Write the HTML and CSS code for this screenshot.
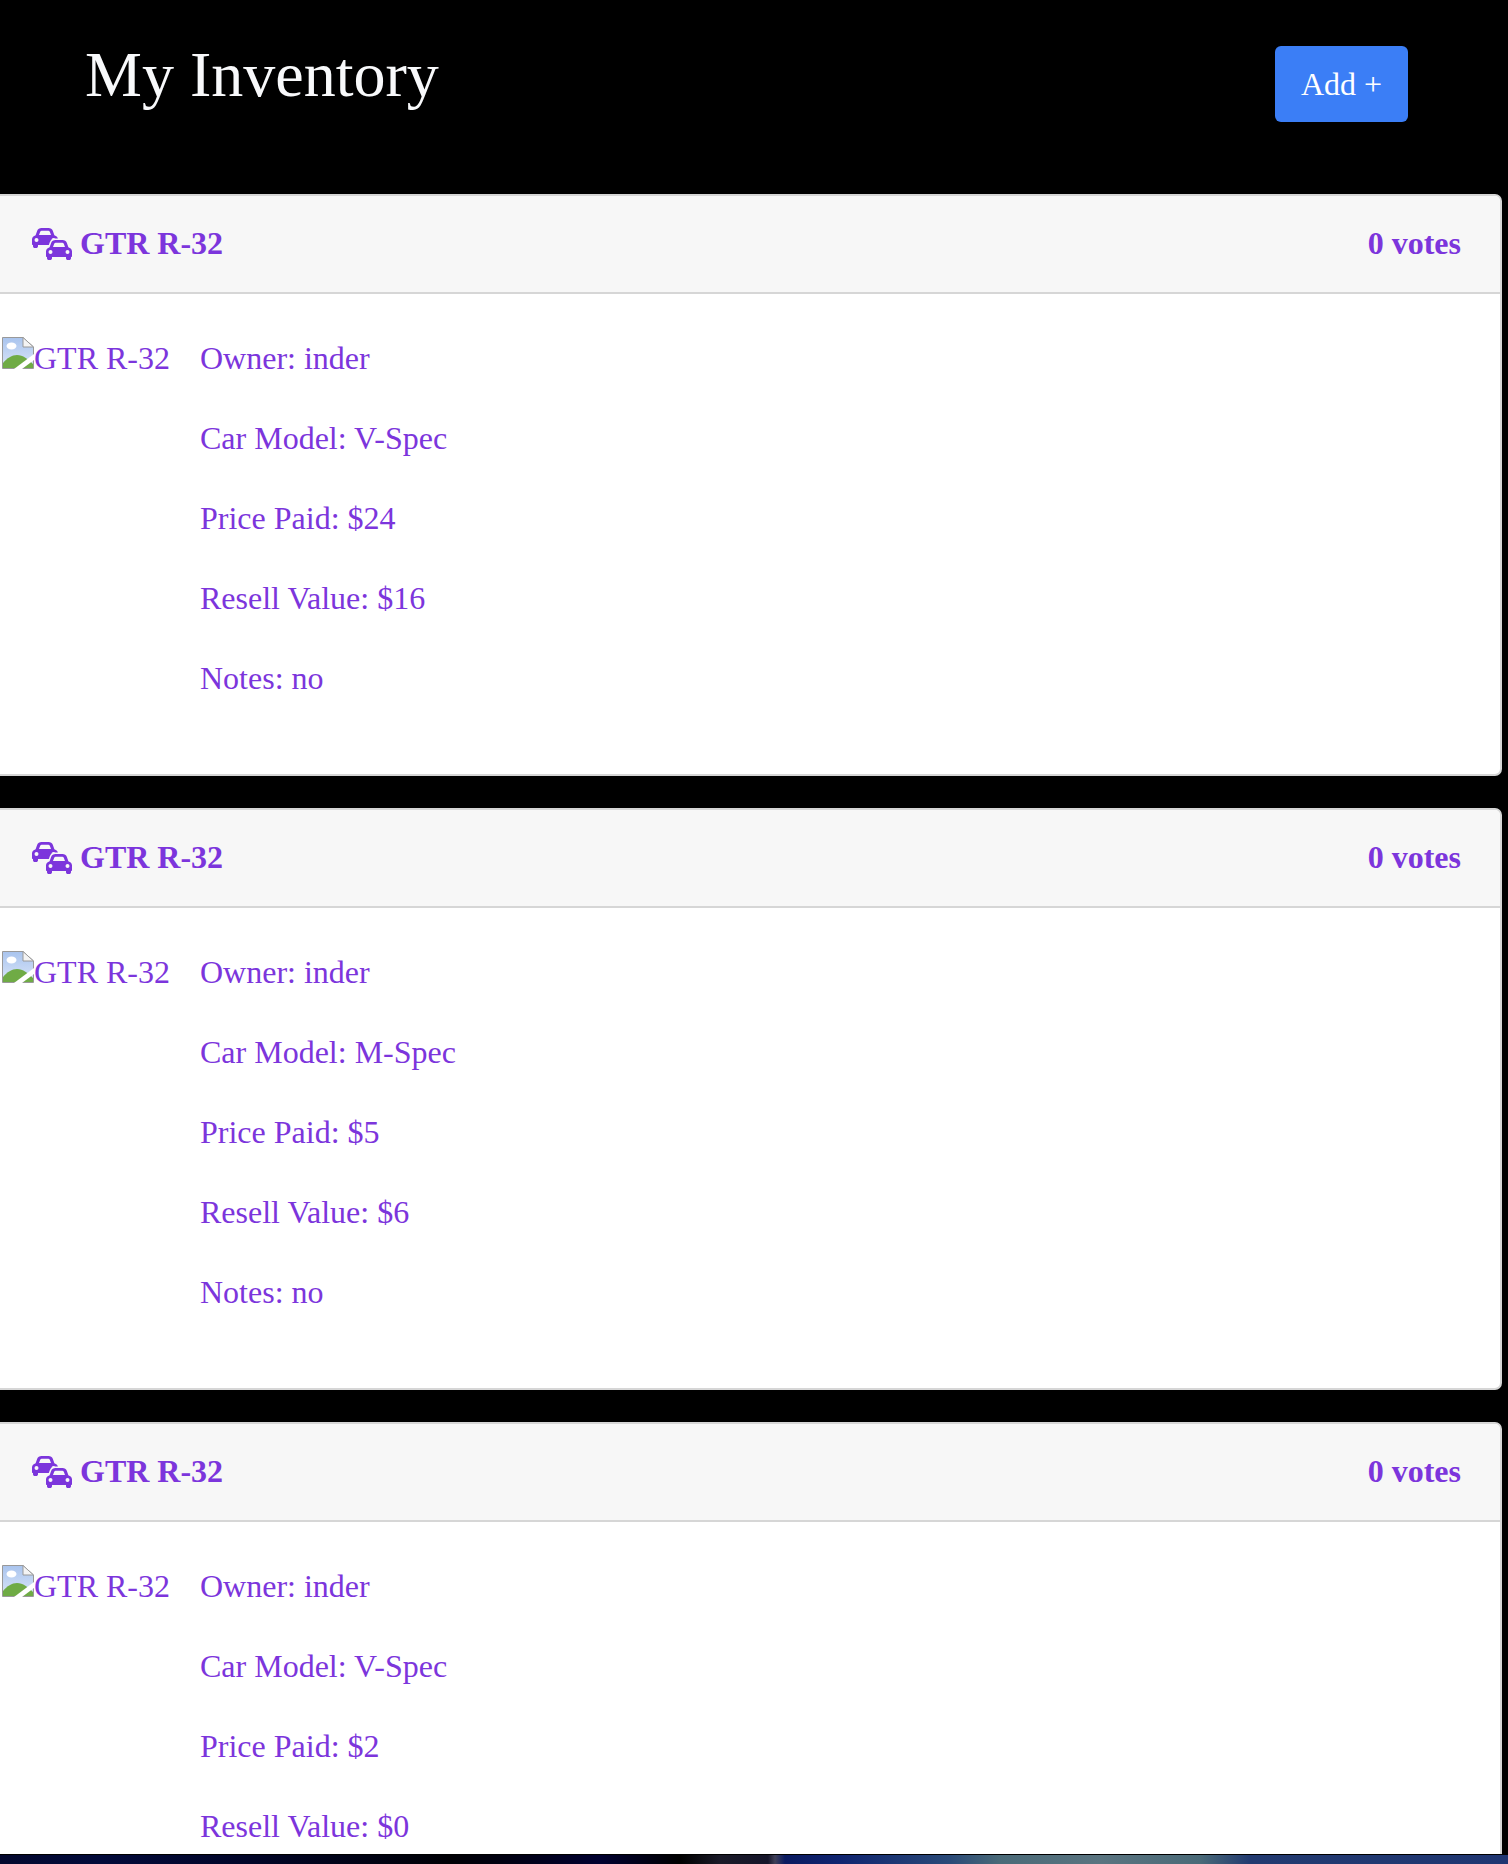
FILE: index.html
```html
<!DOCTYPE html>
<html lang="en">
<head>
  <meta charset="UTF-8" />
  <title>My Inventory</title>
  <link rel="stylesheet" href="styles.css">
</head>
<body>
  <svg class="defs" width="0" height="0">
    <symbol id="cars" viewBox="0 0 40 32">
      <path d="M3.600 7.200 L5.200 2.800 C5.900 1 7.500 0 9.400 0 H16.600 C18.500 0 20.100 1 20.800 2.800 L22.400 7.200 C24.400 7.800 26 9.500 26 11.500 V16 C26 16.600 25.700 17 25 17 V18.200 C25 19.200 24.200 20 23.200 20 H21.800 C20.800 20 20 19.200 20 18.200 V17 H6 V18.200 C6 19.200 5.200 20 4.200 20 H2.800 C1.800 20 1 19.200 1 18.200 V17 C0.300 17 0 16.600 0 16 V11.500 C0 9.500 1.600 7.800 3.600 7.200 Z M7 7 H19 L17.900 3.900 C17.600 3.200 17 2.800 16.300 2.800 H9.700 C9 2.800 8.400 3.200 8.100 3.900 Z M4.500 10 A2 2 0 1 0 4.500 14 A2 2 0 1 0 4.500 10 Z M21.500 10 A2 2 0 1 0 21.500 14 A2 2 0 1 0 21.500 10 Z" fill-rule="evenodd" fill="#7c35dc"/>
      <g transform="translate(14 12)">
        <path d="M3.600 7.200 L5.200 2.800 C5.900 1 7.500 0 9.400 0 H16.600 C18.500 0 20.100 1 20.800 2.800 L22.400 7.200 C24.400 7.800 26 9.500 26 11.500 V16 C26 16.600 25.700 17 25 17 V18.200 C25 19.200 24.200 20 23.200 20 H21.800 C20.800 20 20 19.200 20 18.200 V17 H6 V18.200 C6 19.200 5.200 20 4.200 20 H2.800 C1.800 20 1 19.200 1 18.200 V17 C0.300 17 0 16.600 0 16 V11.500 C0 9.500 1.600 7.800 3.600 7.200 Z" fill="#f7f7f7" stroke="#f7f7f7" stroke-width="3"/>
        <path d="M3.600 7.200 L5.200 2.800 C5.900 1 7.500 0 9.400 0 H16.600 C18.500 0 20.100 1 20.800 2.800 L22.400 7.200 C24.400 7.800 26 9.500 26 11.500 V16 C26 16.600 25.700 17 25 17 V18.200 C25 19.200 24.200 20 23.200 20 H21.800 C20.800 20 20 19.200 20 18.200 V17 H6 V18.200 C6 19.200 5.200 20 4.200 20 H2.800 C1.800 20 1 19.200 1 18.200 V17 C0.300 17 0 16.600 0 16 V11.500 C0 9.500 1.600 7.800 3.600 7.200 Z M7 7 H19 L17.900 3.900 C17.600 3.200 17 2.800 16.300 2.800 H9.700 C9 2.800 8.400 3.200 8.100 3.900 Z M4.500 10 A2 2 0 1 0 4.500 14 A2 2 0 1 0 4.500 10 Z M21.500 10 A2 2 0 1 0 21.500 14 A2 2 0 1 0 21.500 10 Z" fill-rule="evenodd" fill="#7c35dc"/>
      </g>
    </symbol>
    <symbol id="broken" viewBox="0 0 32 32">
      <linearGradient id="sky" x1="0" y1="0" x2="0" y2="1">
        <stop offset="0" stop-color="#a9c4ee"/>
        <stop offset="1" stop-color="#dbe6f8"/>
      </linearGradient>
      <path d="M0.500 0.500 H21 L31.500 10 V31.500 H0.500 Z" fill="url(#sky)" stroke="#999"/>
      <path d="M21 0.500 V10 H31.500 Z" fill="#f4f4f4" stroke="#999"/>
      <ellipse cx="9.500" cy="9" rx="5" ry="3.500" fill="#fff"/>
      <path d="M1 31 V26 C5 21 10 18 15 18 C21 18 26 22 31 27 V31 Z" fill="#6fab45"/>
      <path d="M12 32 L32 17 V23 L20 32 Z" fill="#fff"/>
    </symbol>
  </svg>

  <div class="page-header">
    <h1 class="page-title">My Inventory</h1>
    <button type="button" class="add-btn">Add +</button>
  </div>

  <div class="card-list">
    <div class="card">
      <div class="card-head">
        <span class="card-name"><svg class="car-icon"><use href="#cars"/></svg><span class="name-text">GTR R-32</span></span>
        <span class="card-votes">0 votes</span>
      </div>
      <div class="card-body">
        <div class="car-photo"><svg class="broken-img"><use href="#broken"/></svg>GTR R-32</div>
        <div class="car-info">
          <p>Owner: inder</p>
          <p>Car Model: V-Spec</p>
          <p>Price Paid: $24</p>
          <p>Resell Value: $16</p>
          <p>Notes: no</p>
        </div>
      </div>
    </div>

    <div class="card">
      <div class="card-head">
        <span class="card-name"><svg class="car-icon"><use href="#cars"/></svg><span class="name-text">GTR R-32</span></span>
        <span class="card-votes">0 votes</span>
      </div>
      <div class="card-body">
        <div class="car-photo"><svg class="broken-img"><use href="#broken"/></svg>GTR R-32</div>
        <div class="car-info">
          <p>Owner: inder</p>
          <p>Car Model: M-Spec</p>
          <p>Price Paid: $5</p>
          <p>Resell Value: $6</p>
          <p>Notes: no</p>
        </div>
      </div>
    </div>

    <div class="card">
      <div class="card-head">
        <span class="card-name"><svg class="car-icon"><use href="#cars"/></svg><span class="name-text">GTR R-32</span></span>
        <span class="card-votes">0 votes</span>
      </div>
      <div class="card-body">
        <div class="car-photo"><svg class="broken-img"><use href="#broken"/></svg>GTR R-32</div>
        <div class="car-info">
          <p>Owner: inder</p>
          <p>Car Model: V-Spec</p>
          <p>Price Paid: $2</p>
          <p>Resell Value: $0</p>
        </div>
      </div>
    </div>
  </div>

  <div class="bottom-strip"></div>
</body>
</html>
```

FILE: styles.css
```css
html, body {
  margin: 0;
  height: 100%;
  overflow: hidden;
}
body {
  display: flex;
  flex-direction: column;
  font-family: "Liberation Serif", "Times New Roman", serif;
  background: #000;
  color: #7c35dc;
}
.defs {
  position: absolute;
}
.page-header {
  display: flex;
  justify-content: space-between;
  align-items: flex-start;
  flex-shrink: 0;
  height: 194px;
  padding: 0 100px 0 85px;
  box-sizing: border-box;
}
.page-title {
  margin: 40px 0 0;
  font-size: 64px;
  font-weight: 400;
  line-height: 70px;
  color: #f8f9fb;
}
.add-btn {
  margin-top: 46px;
  width: 133px;
  height: 76px;
  padding: 0;
  background: #3b7ef6;
  border: none;
  border-radius: 6px;
  color: #fff;
  font-family: inherit;
  font-size: 32px;
}
.card-list {
  display: flex;
  flex-direction: column;
  gap: 32px;
  flex: 1;
  min-height: 0;
  overflow: hidden;
  margin-left: -6px;
  width: 1508px;
}
.card {
  flex-shrink: 0;
  background: #fff;
  border: 2px solid #d6d6d6;
  border-radius: 7px;
  height: 582px;
  box-sizing: border-box;
  overflow: hidden;
}
.card-head {
  display: flex;
  justify-content: space-between;
  align-items: center;
  height: 98px;
  box-sizing: border-box;
  padding: 0 39px 0 36px;
  background: #f7f7f7;
  border-bottom: 2px solid #d6d6d6;
  font-size: 32px;
  font-weight: 700;
}
.card-name {
  display: flex;
  align-items: center;
  gap: 8px;
}
.name-text {
  margin-top: -2px;
}
.card-votes {
  margin-top: -1px;
}
.car-icon {
  width: 40px;
  height: 32px;
}
.card-body {
  display: flex;
  align-items: baseline;
  padding: 43px 0 0 6px;
  font-size: 32px;
}
.car-photo {
  width: 198px;
  flex-shrink: 0;
  line-height: 36px;
}
.broken-img {
  width: 32px;
  height: 32px;
}
.car-info p {
  margin: 0 0 44px;
  line-height: 36px;
}
.bottom-strip {
  flex-shrink: 0;
  height: 9px;
  border-top: 1px solid #000;
  background: linear-gradient(90deg, #03082e 0, #020a3a 100px, #010528 250px, #000005 450px, #000010 500px, #000030 600px, #000 680px, #1a1a28 720px, #15152a 768px, #404058 775px, #0a1a60 785px, #0f2470 840px, #2a4a78 950px, #4a6a78 1000px, #5a7480 1100px, #4a6a78 1200px, #223a70 1250px, #1f3672 1508px);
}
```
